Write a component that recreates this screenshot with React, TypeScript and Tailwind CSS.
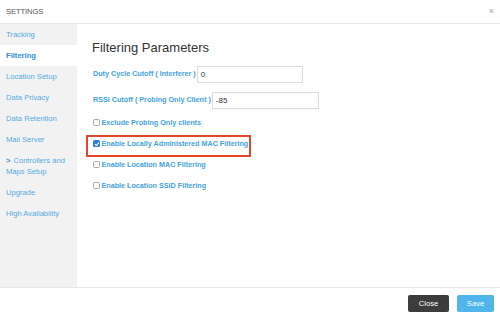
import React from "react";

const navItems = [
  "Tracking",
  "Filtering",
  "Location Setup",
  "Data Privacy",
  "Data Retention",
  "Mail Server",
];

function Checkbox({ checked }: { checked?: boolean }) {
  if (checked) {
    return (
      <span className="inline-flex w-[7px] h-[7px] rounded-[1.5px] bg-[#2f7fd6] items-center justify-center shrink-0">
        <svg width="6" height="6" viewBox="0 0 6 6">
          <path d="M1 3.1 L2.4 4.5 L5 1.6" stroke="white" strokeWidth="1.1" fill="none" />
        </svg>
      </span>
    );
  }
  return <span className="inline-block w-[7px] h-[7px] rounded-[1.5px] border border-[#a9a9a9] bg-white shrink-0" />;
}

function CheckRow({ label, checked, boxed }: { label: string; checked?: boolean; boxed?: boolean }) {
  return (
    <div className="relative h-[21px] flex items-center gap-[1.5px] pl-[1px]">
      <Checkbox checked={checked} />
      <span className="text-[7.2px] font-bold text-[#45a2dc] leading-none">{label}</span>
      {boxed && (
        <div className="absolute left-[-6px] top-[2px] w-[165px] h-[22px] border-2 border-[#e2462c]" />
      )}
    </div>
  );
}

export default function App() {
  return (
    <div
      className="w-[500px] h-[319px] bg-white flex flex-col overflow-hidden"
      style={{ fontFamily: '"Liberation Sans", Arial, sans-serif' }}
    >
      <div className="h-[24px] shrink-0 border-b border-[#e6e6e6] flex items-center justify-between pl-[6px] pr-[6px]">
        <span className="text-[7.6px] text-[#555] tracking-[-0.1px]">SETTINGS</span>
        <span className="text-[9px] text-[#a0a0a0] leading-none">×</span>
      </div>
      <div className="flex flex-1 min-h-0">
        <div className="w-[77px] shrink-0 bg-[#f2f2f2] flex flex-col">
          {navItems.map((item) => (
            <div
              key={item}
              className={
                "h-[21px] flex items-center pl-[6px] text-[7.6px] " +
                (item === "Filtering" ? "bg-white font-bold text-[#2f8fd0]" : "text-[#52abe0]")
              }
            >
              {item}
            </div>
          ))}
          <div className="h-[32px] flex flex-col justify-center pl-[6px] text-[7.6px] text-[#52abe0] leading-[11px]">
            <span>
              <span className="font-bold text-[#3a96d6] mr-[3px]">&gt;</span>Controllers and
            </span>
            <span>Maps Setup</span>
          </div>
          <div className="h-[21px] flex items-center pl-[6px] text-[7.6px] text-[#52abe0]">Upgrade</div>
          <div className="h-[21px] flex items-center pl-[6px] text-[7.6px] text-[#52abe0]">High Availability</div>
        </div>
        <div className="flex-1 pl-[15px] pt-[16px]">
          <div className="h-[16px] text-[13px] leading-[16px] text-[#333]">Filtering Parameters</div>
          <div className="mt-[10px] h-[17px] flex items-center pl-[1px]">
            <span className="text-[7.2px] font-bold text-[#45a2dc]">Duty Cycle Cutoff ( Interferer )</span>
            <div className="ml-[1px] w-[106px] h-[17px] border border-[#dcdcdc] flex items-center pl-[3px] text-[8px] text-[#333]">
              0
            </div>
          </div>
          <div className="mt-[9px] h-[17px] flex items-center pl-[1px]">
            <span className="text-[7.2px] font-bold text-[#45a2dc]">RSSI Cutoff ( Probing Only Client )</span>
            <div className="ml-[1px] w-[107px] h-[17px] border border-[#dcdcdc] flex items-center pl-[3px] text-[8px] text-[#333]">
              -85
            </div>
          </div>
          <div className="mt-[3px]">
            <CheckRow label="Exclude Probing Only clients" />
            <CheckRow label="Enable Locally Administered MAC Filtering" checked boxed />
            <CheckRow label="Enable Location MAC Filtering" />
            <CheckRow label="Enable Location SSID Filtering" />
          </div>
        </div>
      </div>
      <div className="h-[32px] shrink-0 border-t border-[#e6e6e6] flex items-center justify-end gap-[8px] pr-[6px]">
        <button className="w-[41px] h-[17px] rounded-[2px] bg-[#3c3c3c] text-white text-[7.6px]">Close</button>
        <button className="w-[37px] h-[17px] rounded-[2px] bg-[#4fb5ea] text-white text-[7.6px]">Save</button>
      </div>
    </div>
  );
}
